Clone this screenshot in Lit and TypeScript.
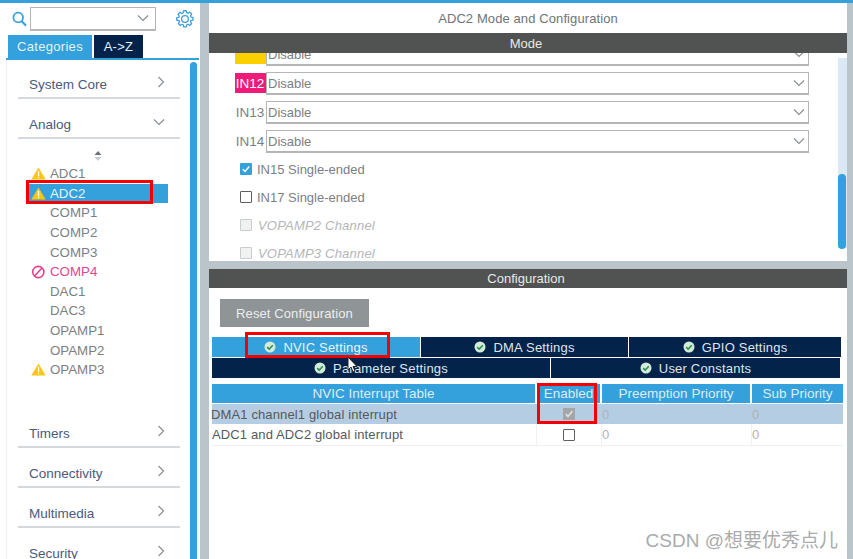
import { html, css, LitElement, svg } from "lit";
import { customElement } from "lit/decorators.js";

const chevronRight = html`<svg class="chev" width="8" height="12" viewBox="0 0 8 12"><path d="M1.500 1 6.500 6 1.500 11" fill="none" stroke="#8a9096" stroke-width="1.200"/></svg>`;
const chevronDown = html`<svg class="chev" width="12" height="8" viewBox="0 0 12 8"><path d="M1 1.500 6 6.500 11 1.500" fill="none" stroke="#8a9096" stroke-width="1.200"/></svg>`;
const warn = html`<svg class="ico" width="15" height="13" viewBox="0 0 15 13"><path d="M7.500.5 14.700 12.600H.3Z" fill="#fcc70d"/><rect x="6.900" y="4" width="1.300" height="5" fill="#fff"/><rect x="6.900" y="9.800" width="1.300" height="1.400" fill="#fff"/></svg>`;
const ban = html`<svg class="ico" width="15" height="14" viewBox="0 0 15 14"><circle cx="7.300" cy="7" r="5.600" fill="none" stroke="#e6438f" stroke-width="1.600"/><path d="M3.500 11 11 3" stroke="#e6438f" stroke-width="1.600"/></svg>`;
const okCircle = html`<svg class="ok" width="12" height="12" viewBox="0 0 12 12"><circle cx="6" cy="6" r="5.500" fill="#d3ecd8"/><path d="M3.200 6.100 5.200 8 8.800 4.200" fill="none" stroke="#2f8f5b" stroke-width="1.600"/></svg>`;
const gear = svg`<path d="M10.200 1h3.600l.5 2.700 1.700.7 2.300-1.600 2.600 2.600-1.600 2.300.7 1.700 2.700.5v3.600l-2.700.5-.7 1.700 1.600 2.300-2.600 2.600-2.300-1.600-1.700.7-.5 2.700h-3.600l-.5-2.700-1.700-.7-2.300 1.600-2.600-2.600 1.600-2.300-.7-1.700L1 13.800v-3.600l2.700-.5.7-1.700-1.600-2.300 2.600-2.600 2.300 1.600 1.700-.7Z" fill="none" stroke="#3a9fdd" stroke-width="1.700" stroke-linejoin="round"/><circle cx="12" cy="12" r="4.500" fill="none" stroke="#3a9fdd" stroke-width="1.700"/>`;

const ips: [string, string?][] = [
  ["ADC1", "warn"],
  ["ADC2", "warn-active"],
  ["COMP1"],
  ["COMP2"],
  ["COMP3"],
  ["COMP4", "ban"],
  ["DAC1"],
  ["DAC3"],
  ["OPAMP1"],
  ["OPAMP2"],
  ["OPAMP3", "warn"],
];

@customElement("app-root")
export class AppRoot extends LitElement {
  static styles = css`
    :host {
      display: block;
      position: relative;
      width: 853px;
      height: 559px;
      overflow: hidden;
      background: #fff;
      font-family: "Liberation Sans", Arial, sans-serif;
      font-size: 13px;
      color: #7b7f84;
    }
    .top {
      height: 3px;
      background: #34a0dc;
    }
    .main {
      display: grid;
      grid-template-columns: 200px 9px 638px 6px;
      height: 556px;
    }
    .gutter {
      background: #b9c5ca;
    }

    /* left panel */
    .left {
      display: flex;
      flex-direction: column;
      overflow: hidden;
    }
    .search {
      display: flex;
      align-items: center;
      height: 25px;
      margin-top: 3px;
      padding-left: 12px;
    }
    .combo {
      width: 126px;
      height: 24px;
      margin-left: 3px;
      border: 1px solid #b5b7b8;
      border-bottom-width: 2px;
      display: flex;
      align-items: center;
      justify-content: flex-end;
      padding-right: 6px;
      box-sizing: border-box;
    }
    .search .gear {
      margin-left: 20px;
    }
    .tabs {
      display: flex;
      height: 23px;
      margin-top: 4px;
      padding-left: 8px;
      gap: 2px;
    }
    .tabs div {
      color: #e6f3fb;
      display: flex;
      align-items: center;
      justify-content: center;
      letter-spacing: 0.3px;
    }
    .tabs .on {
      width: 84px;
      background: #34a0dc;
    }
    .tabs .off {
      width: 49px;
      background: #03234b;
    }
    .tabline {
      height: 2px;
      margin-left: 6px;
      margin-right: 1px;
      background: #34a0dc;
    }
    .tree {
      flex: 1;
      display: flex;
      margin-left: 6px;
      border-left: 1px solid #eef0f1;
      overflow: hidden;
    }
    .tree-body {
      width: 183px;
      padding-top: 1px;
    }
    .tree-bar {
      width: 7px;
      margin-top: 2px;
      border-radius: 4px 4px 0 0;
      background: #34a0dc;
    }
    .cat {
      display: flex;
      align-items: center;
      justify-content: space-between;
      height: 38px;
      margin-left: 11px;
      width: 162px;
      box-sizing: border-box;
      padding: 10px 15px 0 11px;
      border-bottom: 2px solid #d6d9dc;
      color: #4a5a7c;
      margin-bottom: 2px;
      font-size: 13.500px;
    }
    .cat .chev {
      margin-top: -4px;
    }
    .sort {
      display: flex;
      justify-content: center;
      margin: 11px 0 0 -12px;
      height: 14px;
      width: 205px;
    }
    .ips {
      height: 246px;
      font-size: 13.300px;
    }
    .ip {
      display: flex;
      align-items: center;
      height: 19.600px;
      padding-left: 24px;
      width: 137px;
      box-sizing: border-box;
      line-height: 19px;
    }
    .ip .slot {
      width: 19px;
      display: flex;
      flex: none;
    }
    .ip.active {
      width: 162px;
      background: linear-gradient(#34a0dc, #34a0dc) 20px 0 / 141px 100% no-repeat;
      color: #e8f4fb;
    }
    .ip.ban {
      color: #e6438f;
    }

    /* right panel */
    .right {
      display: flex;
      flex-direction: column;
      overflow: hidden;
    }
    .title {
      height: 30px;
      display: flex;
      align-items: center;
      justify-content: center;
      color: #6f7478;
      letter-spacing: 0.1px;
    }
    .bar {
      background: #505351;
      color: #e7e9e8;
      display: flex;
      align-items: center;
      justify-content: center;
      padding-right: 4px;
    }
    .bar.mode {
      height: 20px;
    }
    .bar.conf {
      height: 19px;
    }
    .mode-scroll {
      position: relative;
      height: 208px;
      overflow: hidden;
    }
    .rows {
      margin-top: -10px;
      padding-left: 26px;
    }
    .pin {
      display: flex;
      height: 23px;
      margin-bottom: 6px;
      align-items: center;
    }
    .pin label {
      width: 31px;
      height: 20px;
      margin-bottom: 1px;
      padding-right: 1px;
      display: flex;
      align-items: center;
      justify-content: center;
      box-sizing: border-box;
      font-size: 13.500px;
    }
    .pin label.red {
      background: #f01a78;
      color: #fff;
    }
    .pin label.yellow {
      background: #fcd000;
      color: #fcd000;
    }
    .select {
      width: 543px;
      height: 23px;
      box-sizing: border-box;
      border: 1px solid #b3b5b7;
      border-bottom-width: 2px;
      display: flex;
      align-items: center;
      justify-content: space-between;
      padding: 0 3px 0 1px;
    }
    .check {
      display: flex;
      align-items: center;
      height: 28px;
      padding-left: 5px;
      gap: 5px;
    }
    .check.first {
      margin-top: -4px;
    }
    .box {
      width: 12px;
      height: 12px;
      box-sizing: border-box;
      border: 1px solid #5c6064;
      border-radius: 1px;
      flex: none;
    }
    .box.on {
      border: 0;
      background: #34a0dc;
    }
    .box.off {
      border-color: #c9cbcc;
      background: #f0f1f1;
    }
    .check i {
      color: #b4b6b8;
      letter-spacing: 0.2px;
      margin-left: 1px;
    }
    .scroll {
      position: absolute;
      top: 5px;
      right: 0;
      width: 9px;
      height: 190px;
      background: #dbe9f5;
    }
    .thumb {
      position: absolute;
      top: 116px;
      left: 0;
      width: 8px;
      height: 75px;
      border-radius: 4px;
      background: #34a0dc;
    }
    .band {
      height: 8px;
      background: #b9c5ca;
    }
    .config {
      padding: 11px 6px 0 3px;
    }
    .reset {
      width: 149px;
      height: 28px;
      margin-left: 8px;
      background: #8f9496;
      color: #eceeee;
      display: flex;
      align-items: center;
      justify-content: center;
      letter-spacing: 0.1px;
    }
    .tabrow {
      display: grid;
      gap: 1px;
      margin-top: 1px;
      height: 20px;
    }
    .tabrow.first {
      margin-top: 10px;
      grid-template-columns: 208px 207px 212px;
    }
    .tabrow.second {
      grid-template-columns: 338px 289px;
    }
    .tab {
      background: #03234b;
      color: #dfe5ec;
      display: flex;
      align-items: center;
      justify-content: center;
      gap: 7px;
      letter-spacing: 0.2px;
    }
    .tab.on {
      background: #34a0dc;
      color: #e8f4fb;
    }
    .table {
      margin-top: 6px;
      width: 631px;
    }
    .tr {
      display: grid;
      grid-template-columns: 323px 2px 63px 2px 148px 2px 91px;
      height: 20px;
    }
    .tr.head {
      height: 19px;
      margin-bottom: 1px;
      color: #dcedf8;
      font-size: 13.500px;
    }
    .tr.head span {
      background: #34a0dc;
      display: flex;
      align-items: center;
      justify-content: center;
    }
    .tr.head span:nth-child(even) {
      background: transparent;
    }
    .tr.sel {
      background: #b5cde3;
    }
    .tr.plain {
      height: 21px;
      border-bottom: 1px solid #eef0f1;
    }
    .tr > .name {
      color: #56595c;
      display: flex;
      align-items: center;
      letter-spacing: 0.13px;
    }
    .tr.sel > .name {
      margin-left: -1px;
    }
    .tr > .cell {
      display: flex;
      align-items: center;
      justify-content: center;
    }
    .tr > .num {
      display: flex;
      align-items: center;
      color: #b0b4b8;
    }
    .sep {
      background: transparent;
    }
    .tr.plain .sep {
      background: linear-gradient(#eef0f1, #eef0f1) center / 1px 100% no-repeat;
    }
    .mark {
      background: #a3a5a7;
      display: flex;
      align-items: center;
      justify-content: center;
      width: 12px;
      height: 12px;
    }

    /* annotations drawn over the screenshot */
    .redbox {
      position: absolute;
      border: 3px solid #f40000;
      box-sizing: border-box;
    }
    .r1 {
      left: 26px;
      top: 180px;
      width: 127px;
      height: 24px;
    }
    .r2 {
      left: 245px;
      top: 332px;
      width: 145px;
      height: 26px;
    }
    .r3 {
      left: 537px;
      top: 383px;
      width: 60px;
      height: 41px;
    }
    .cursor {
      position: absolute;
      left: 347px;
      top: 356px;
    }
    .mark-text {
      position: absolute;
      right: 15px;
      top: 525px;
      font-family: "Liberation Sans", "Noto Sans CJK SC", sans-serif;
      font-size: 19px;
      color: #a9abac;
      white-space: nowrap;
    }
  `;

  renderIp(name: string, kind?: string) {
    const cls = kind === "warn-active" ? "active" : kind === "ban" ? "ban" : "";
    const icon = kind === "ban" ? ban : kind ? warn : "";
    return html`<div class="ip ${cls}"><span class="slot">${icon}</span>${name}</div>`;
  }

  renderCat(name: string, open = false) {
    return html`<div class="cat">${name}${open ? chevronDown : chevronRight}</div>`;
  }

  renderPin(name: string, cls = "") {
    return html`<div class="pin">
      <label class=${cls}>${name}</label>
      <div class="select">Disable${chevronDown}</div>
    </div>`;
  }

  render() {
    return html`
      <div class="top"></div>
      <div class="main">
        <div class="left">
          <div class="search">
            <svg width="15" height="16" viewBox="0 0 15 16"><circle cx="6.200" cy="6.500" r="4.800" fill="none" stroke="#3a9fdd" stroke-width="1.800"/><path d="M9.800 10.300 14 14.800" stroke="#3a9fdd" stroke-width="2"/></svg>
            <div class="combo">${chevronDown}</div>
            <svg class="gear" width="18" height="18" viewBox="0 0 24 24">${gear}</svg>
          </div>
          <div class="tabs">
            <div class="on">Categories</div>
            <div class="off">A-&gt;Z</div>
          </div>
          <div class="tabline"></div>
          <div class="tree">
            <div class="tree-body">
              ${this.renderCat("System Core")}
              ${this.renderCat("Analog", true)}
              <div class="sort">
                <svg width="8" height="12" viewBox="0 0 8 12"><path d="M4 1 7.500 5H.5Z" fill="#6c7074"/><path d="M4 11 7.500 7H.5Z" fill="#c9cbcc"/></svg>
              </div>
              <div class="ips">${ips.map(([n, k]) => this.renderIp(n, k))}</div>
              ${this.renderCat("Timers")}
              ${this.renderCat("Connectivity")}
              ${this.renderCat("Multimedia")}
              ${this.renderCat("Security")}
            </div>
            <div class="tree-bar"></div>
          </div>
        </div>
        <div class="gutter"></div>
        <div class="right">
          <div class="title">ADC2 Mode and Configuration</div>
          <div class="bar mode">Mode</div>
          <div class="mode-scroll">
            <div class="rows">
              ${this.renderPin("IN11", "yellow")}
              ${this.renderPin("IN12", "red")}
              ${this.renderPin("IN13")}
              ${this.renderPin("IN14")}
              <div class="check first">
                <span class="box on"><svg width="12" height="12" viewBox="0 0 12 12"><path d="M2.800 6.200 5 8.500 9.300 3.500" fill="none" stroke="#fff" stroke-width="1.500"/></svg></span>
                IN15 Single-ended
              </div>
              <div class="check"><span class="box"></span>IN17 Single-ended</div>
              <div class="check"><span class="box off"></span><i>VOPAMP2 Channel</i></div>
              <div class="check"><span class="box off"></span><i>VOPAMP3 Channel</i></div>
            </div>
            <div class="scroll"><div class="thumb"></div></div>
          </div>
          <div class="band"></div>
          <div class="bar conf">Configuration</div>
          <div class="config">
            <div class="reset">Reset Configuration</div>
            <div class="tabrow first">
              <div class="tab on">${okCircle}NVIC Settings</div>
              <div class="tab">${okCircle}DMA Settings</div>
              <div class="tab">${okCircle}GPIO Settings</div>
            </div>
            <div class="tabrow second">
              <div class="tab">${okCircle}Parameter Settings</div>
              <div class="tab">${okCircle}User Constants</div>
            </div>
            <div class="table">
              <div class="tr head">
                <span>NVIC Interrupt Table</span><span></span>
                <span>Enabled</span><span></span>
                <span>Preemption Priority</span><span></span>
                <span>Sub Priority</span>
              </div>
              <div class="tr sel">
                <div class="name">DMA1 channel1 global interrupt</div><div class="sep"></div>
                <div class="cell"><span class="mark"><svg width="10" height="10" viewBox="0 0 10 10"><path d="M1.800 5 4 7.500 8.300 2.300" fill="none" stroke="#e8e9e9" stroke-width="1.400"/></svg></span></div><div class="sep"></div>
                <div class="num">0</div><div class="sep"></div>
                <div class="num">0</div>
              </div>
              <div class="tr plain">
                <div class="name">ADC1 and ADC2 global interrupt</div><div class="sep"></div>
                <div class="cell"><span class="box"></span></div><div class="sep"></div>
                <div class="num">0</div><div class="sep"></div>
                <div class="num">0</div>
              </div>
            </div>
          </div>
        </div>
        <div class="gutter"></div>
      </div>
      <div class="redbox r1"></div>
      <div class="redbox r2"></div>
      <div class="redbox r3"></div>
      <svg class="cursor" width="12" height="18" viewBox="0 0 12 18"><path d="M1 1V14L4 11 6 16 8 15 6 10.500H10Z" fill="#fff" stroke="#222" stroke-width="1"/></svg>
      <div class="mark-text">CSDN @想要优秀点儿</div>
    `;
  }
}
